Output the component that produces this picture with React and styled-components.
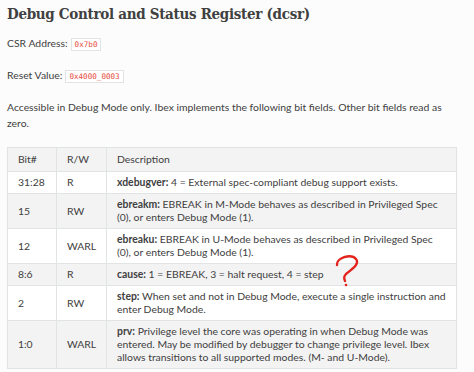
import React from "react";
import styled, { createGlobalStyle } from "styled-components";

const GlobalStyle = createGlobalStyle`
  html, body { margin: 0; padding: 0; background: #fcfcfc; }
  body { font-family: Lato, "Open Sans", sans-serif; color: #404040; }
`;

const Page = styled.div`
  position: relative;
  width: 474px;
  height: 372px;
  overflow: hidden;
  padding: 4px 0 0 7px;
  box-sizing: border-box;
`;

const Title = styled.h1`
  margin: 0 0 12px;
  font-family: "DejaVu Serif", "Liberation Serif", serif;
  font-stretch: condensed;
  font-weight: 700;
  font-size: 15px;
  letter-spacing: -0.3px;
  line-height: 20px;
  color: #404040;
`;

const Para = styled.p`
  margin: 0 0 15.6px;
  font-size: 10.4px;
  line-height: 15.6px;
  width: 452px;
`;

const Literal = styled.code`
  font-family: "DejaVu Sans Mono", "Liberation Mono", monospace;
  font-size: 7.6px;
  color: #e74c3c;
  background: #fff;
  border: 1px solid #e1e4e5;
  padding: 1px 3px;
  margin-left: 3px;
`;

const Table = styled.table`
  border-collapse: collapse;
  table-layout: fixed;
  width: 450px;
  border: 1px solid #e1e4e5;
  font-size: 10.4px;
  line-height: 13px;
`;

const Row = styled.tr`
  background: ${(p) => (p.$shade ? "#f3f3f3" : "#fff")};
`;

const Head = styled.th`
  font-weight: 400;
  text-align: left;
  padding: 5px 10px;
  border: 1px solid #e1e4e5;
  background: #f3f3f3;
`;

const Cell = styled.td`
  padding: 4px 10px;
  border: 1px solid #e1e4e5;
  vertical-align: middle;
`;

const Field = styled.b`
  font-weight: 700;
`;

const Mark = styled.svg`
  position: absolute;
  left: 332px;
  top: 250px;
`;

const rows = [
  ["31:28", "R", "xdebugver:", "4 = External spec-compliant debug support exists."],
  ["15", "RW", "ebreakm:", "EBREAK in M-Mode behaves as described in Privileged Spec (0), or enters Debug Mode (1)."],
  ["12", "WARL", "ebreaku:", "EBREAK in U-Mode behaves as described in Privileged Spec (0), or enters Debug Mode (1)."],
  ["8:6", "R", "cause:", "1 = EBREAK, 3 = halt request, 4 = step"],
  ["2", "RW", "step:", "When set and not in Debug Mode, execute a single instruction and enter Debug Mode."],
  ["1:0", "WARL", "prv:", "Privilege level the core was operating in when Debug Mode was entered. May be modified by debugger to change privilege level. Ibex allows transitions to all supported modes. (M- and U-Mode)."],
];

export default function App() {
  return (
    <Page>
      <GlobalStyle />
      <Title>Debug Control and Status Register (dcsr)</Title>
      <Para>CSR Address:<Literal>0x7b0</Literal></Para>
      <Para>Reset Value:<Literal>0x4000_0003</Literal></Para>
      <Para>
        Accessible in Debug Mode only. Ibex implements the following bit fields. Other bit fields read as zero.
      </Para>
      <Table>
        <colgroup>
          <col style={{ width: 49 }} />
          <col style={{ width: 50 }} />
          <col />
        </colgroup>
        <thead>
          <tr>
            <Head>Bit#</Head>
            <Head>R/W</Head>
            <Head>Description</Head>
          </tr>
        </thead>
        <tbody>
          {rows.map(([bit, rw, name, desc], i) => (
            <Row key={bit} $shade={i % 2 === 1}>
              <Cell>{bit}</Cell>
              <Cell>{rw}</Cell>
              <Cell>
                <Field>{name}</Field> {desc}
              </Cell>
            </Row>
          ))}
        </tbody>
      </Table>
      <Mark width="34" height="40" viewBox="0 0 34 40">
        <path
          d="M5 15 C4 8 19 3 24 9 C28 14 20 19 14 24 C12 26 12 29 13 31"
          fill="none"
          stroke="#e3231c"
          strokeWidth="2.4"
          strokeLinecap="round"
        />
        <circle cx="14" cy="35" r="1.3" fill="#e3231c" />
      </Mark>
    </Page>
  );
}
